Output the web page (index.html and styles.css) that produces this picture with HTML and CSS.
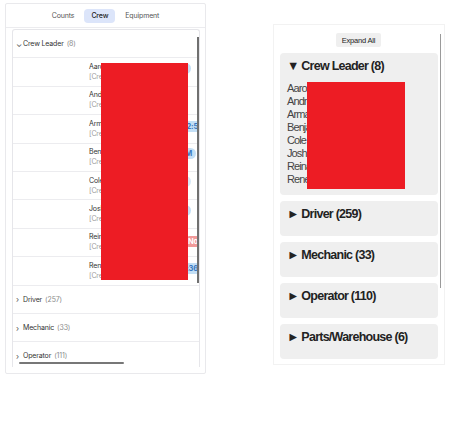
FILE: index.html
```html
<!DOCTYPE html>
<html>
<head>
<meta charset="utf-8">
<link rel="stylesheet" href="styles.css">
</head>
<body>
<div class="page">
  <div class="left">
    <div class="tabs">
      <span class="tab">Counts</span>
      <span class="tab active">Crew</span>
      <span class="tab">Equipment</span>
    </div>
    <div class="list">
      <div class="row head"><span class="chev">⌄</span>Crew Leader <span class="count">(8)</span></div>
      <div class="row item"><div class="info"><div class="nm">Aaron</div><div class="sub">[Crew Leader]</div></div><span class="badge e190">5</span></div>
      <div class="row item"><div class="info"><div class="nm">Andrew</div><div class="sub">[Crew Leader]</div></div></div>
      <div class="row item"><div class="info"><div class="nm">Armando</div><div class="sub">[Crew Leader]</div></div><span class="badge over">12:54</span></div>
      <div class="row item"><div class="info"><div class="nm">Benjamin</div><div class="sub">[Crew Leader]</div></div><span class="badge e196">7 AM</span></div>
      <div class="row item"><div class="info"><div class="nm">Cole</div><div class="sub">[Crew Leader]</div></div><span class="badge e190 faint">3</span></div>
      <div class="row item"><div class="info"><div class="nm">Joshua</div><div class="sub">[Crew Leader]</div></div><span class="badge e190">4</span></div>
      <div class="row item"><div class="info"><div class="nm">Reinaldo</div><div class="sub">[Crew Leader]</div></div><span class="badge red over2">No</span></div>
      <div class="row item"><div class="info"><div class="nm">Rene</div><div class="sub">[Crew Leader]</div></div><span class="badge over3">1:36</span></div>
      <div class="row head"><span class="chev">›</span>Driver <span class="count">(257)</span></div>
      <div class="row head"><span class="chev">›</span>Mechanic <span class="count">(33)</span></div>
      <div class="row head"><span class="chev">›</span>Operator <span class="count">(111)</span></div>
      <div class="vthumb"></div>
      <div class="hthumb"></div>
    </div>
  </div>

  <div class="right">
    <div class="toolbar"><button class="expand">Expand All</button></div>
    <div class="sections">
      <div class="sec open">
        <div class="sec-head">▼ Crew Leader (8)</div>
        <ul class="names">
          <li>Aaron</li><li>Andrew</li><li>Armando</li><li>Benjamin</li>
          <li>Cole</li><li>Joshua</li><li>Reinaldo</li><li>Rene</li>
        </ul>
      </div>
      <div class="sec"><div class="sec-head">► Driver (259)</div></div>
      <div class="sec"><div class="sec-head">► Mechanic (33)</div></div>
      <div class="sec"><div class="sec-head">► Operator (110)</div></div>
      <div class="sec"><div class="sec-head">► Parts/Warehouse (6)</div></div>
    </div>
    <div class="rthumb"></div>
  </div>
</div>
<div class="redact r1"></div>
<div class="redact r2"></div>
</body>
</html>
```
FILE: styles.css
```css
html, body { margin: 0; padding: 0; background: #fff; }
body { width: 474px; height: 434px; position: relative; overflow: hidden; }
.page { display: flex; align-items: flex-start; padding: 3px 0 0 5px; }

.left {
  width: 201px; height: 371px; box-sizing: border-box;
  border: 1px solid #e9e9ec; border-radius: 2px;
  font-family: Inter, "Noto Sans", sans-serif; font-size: 7px; letter-spacing: -0.15px; color: #333;
  display: flex; flex-direction: column;
}
.tabs {
  height: 24px; box-sizing: border-box; border-bottom: 1px solid #ececef;
  display: flex; align-items: center; justify-content: center; gap: 10px;
}
.tab { padding: 3px 0; color: #555; border-radius: 4px; line-height: 8px; }
.tab.active { background: #dce5fa; color: #222; font-weight: 500; padding: 3px 7px; }
.list {
  position: relative; margin: 1px 5px 6px 6px; flex: 1;
  border: 1px solid #e6e6ea; border-bottom: none; border-radius: 3px 3px 0 0; overflow: hidden;
}
.row {
  height: 28.4px; box-sizing: border-box; border-bottom: 1px solid #ececef;
  display: flex; align-items: center;
}
.row.head { padding-left: 3px; color: #333; }
.chev { display: inline-block; width: 7px; color: #555; font-size: 8px; }
.count { color: #8a8a8a; margin-left: 3px; }
.row.item { padding-left: 76px; }
.info { flex: 1; line-height: 10px; white-space: nowrap; }
.nm { color: #333; }
.sub { color: #9a9a9a; }
.badge {
  background: #c3dff6; color: #3a78c0; font-weight: 700; font-size: 7.5px;
  border-radius: 6px; padding: 1px 4px; line-height: 9px; white-space: nowrap; margin-top: -8px;
}
.badge.faint { background: #d7e8f7; }
.badge.red { background: #f19a9a; color: #fff; }
.e190 { margin-right: 8px; }
.e196 { margin-right: 3px; }
.over { margin-right: -8px; margin-top: -4px; }
.over2 { margin-right: -3px; margin-top: -2px; }
.over3 { margin-right: -3px; margin-top: -4px; }
.vthumb { position: absolute; left: 184px; top: 7px; width: 1.5px; height: 246px; background: #707070; }
.hthumb { position: absolute; left: 6px; bottom: 3px; width: 105px; height: 2px; background: #777; border-radius: 1px; }

.right {
  position: relative;
  margin-left: 67px; margin-top: 21px; width: 172px; height: 341px; box-sizing: border-box;
  border: 1px solid #f2f2f2;
  font-family: "Liberation Sans", Arial, sans-serif;
  padding: 8px 6px 0 6px;
}
.toolbar { display: flex; justify-content: center; padding-right: 1px; }
.expand {
  font-family: "Liberation Sans", Arial, sans-serif; font-size: 7.5px; color: #222; letter-spacing: -0.2px;
  background: #efefef; border: none; border-radius: 2px; height: 14px; width: 45px; padding: 0;
}
.sections { display: flex; flex-direction: column; gap: 5.5px; margin-top: 6px; }
.sec { background: #efefef; border-radius: 4px; padding: 5px 7px 14.5px 7px; }
.sec.open { padding-bottom: 9px; }
.sec-head { font-weight: 700; font-size: 12.5px; line-height: 16px; color: #222; letter-spacing: -0.75px; }
.names { list-style: none; margin: 8px 0 0 0; padding: 0; font-size: 11px; line-height: 13px; color: #444; letter-spacing: -0.9px; }
.rthumb { position: absolute; right: 3px; top: 9px; width: 1.5px; height: 254px; background: #9a9a9a; }

.redact { position: absolute; background: #ed1c24; }
.r1 { left: 101px; top: 63px; width: 87px; height: 217px; }
.r2 { left: 307px; top: 82px; width: 98px; height: 107px; }
```
